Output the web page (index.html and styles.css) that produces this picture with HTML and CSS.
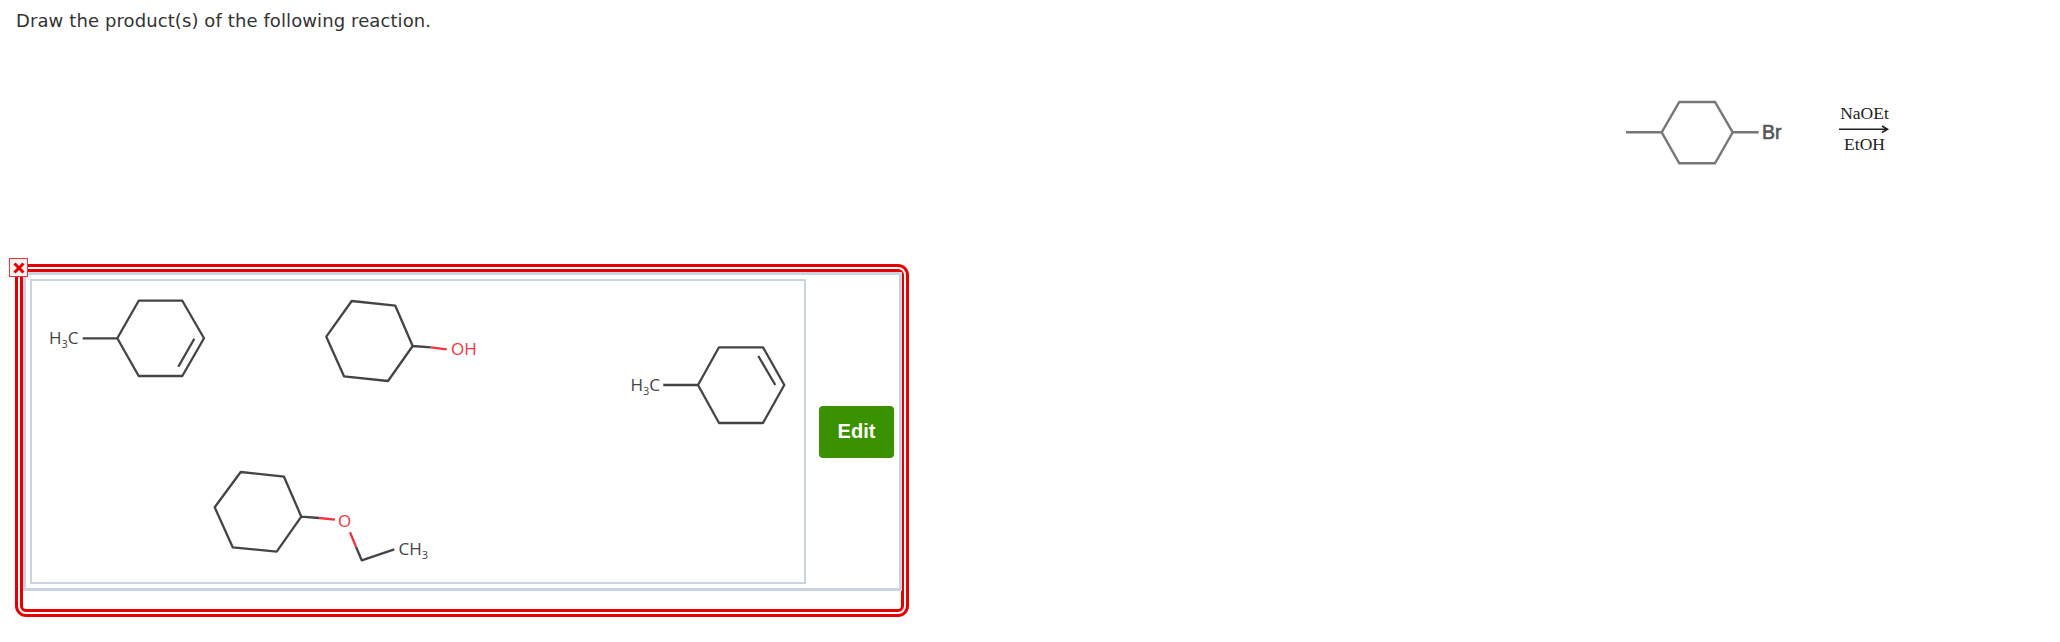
FILE: index.html
```html
<!DOCTYPE html>
<html lang="en">
<head>
<meta charset="utf-8">
<title>Draw the product(s)</title>
<link rel="stylesheet" href="styles.css">
</head>
<body>
<p class="prompt">Draw the product(s) of the following reaction.</p>
<div class="reaction">
  <svg class="reaction-art" width="275" height="85" viewBox="1620 85 275 85">
    <path class="r-bond" d="M1626 132.3H1661.7L1679.3 102H1715L1732.7 132.3L1715 163.3H1679.3L1661.7 132.3M1732.7 132.3H1758.7"/>
    <text class="r-br" x="1762" y="139.3">Br</text>
    <text class="r-reagent" x="1864.5" y="119.3">NaOEt</text>
    <path class="r-arrow" d="M1839 129.3H1887M1882 126L1887.5 129.3L1882 132.5"/>
    <text class="r-reagent" x="1864.5" y="149.7">EtOH</text>
  </svg>
</div>
<div class="answer">
  <button class="close-badge" type="button" aria-label="Remove">
    <svg width="12" height="12" viewBox="0 0 12 12"><path class="close-x" d="M1.5 1.5L10.5 10.5M10.5 1.5L1.5 10.5"/></svg>
  </button>
  <div class="answer-inner">
    <div class="canvas">
      <svg class="canvas-art" width="772" height="301" viewBox="32 281 772 301">
        <path class="bond" d="M82.7 338.3H117.3L138.7 300.7H182.3L204 338.3L182.3 376H138.7L117.3 338.3M194.3 338.7L178.3 366.7"/>
        <text class="atom" x="49" y="344.3">H<tspan class="sub" dy="4">3</tspan><tspan dy="-4">C</tspan></text>

        <path class="bond" d="M351.7 301L395.3 305.7L412.7 346L388 381L344 376.3L326.3 336.7ZM412.7 346L430.7 347.3"/>
        <path class="bond-o" d="M430.7 347.3L446.7 349.3"/>
        <text class="atom-o" x="451" y="355">OH</text>

        <path class="bond" d="M663.3 385H698L719 347.3H763L784.3 385L763 423H719L698 385M758.3 356L775.3 385"/>
        <text class="atom" x="630.5" y="391.3">H<tspan class="sub" dy="4">3</tspan><tspan dy="-4">C</tspan></text>

        <path class="bond" d="M240.7 472L284 476.7L301.3 516.7L276.7 551.7L232.7 547.3L214.7 507.3ZM301.3 516.7L319 518M356 546.7L361.7 560.3L394.3 549.3"/>
        <path class="bond-o" d="M319 518L335 519.7M350 532.3L356 546.7"/>
        <text class="atom-o" x="338" y="526.7">O</text>
        <text class="atom" x="398.5" y="554.5">CH<tspan class="sub" dy="4">3</tspan></text>
      </svg>
    </div>
    <button class="edit" type="button">Edit</button>
  </div>
</div>
</body>
</html>
```
FILE: styles.css
```css
html, body {
  margin: 0;
  padding: 0;
  background: #fff;
}
.prompt {
  margin: 0;
  padding: 10px 16px 12px;
  font: 18px/22px "DejaVu Sans", sans-serif;
  letter-spacing: 0.1px;
  color: #333;
}
.reaction {
  display: flex;
  justify-content: flex-end;
  padding-right: 165px;
  margin-top: 41px;
}
.reaction-art { display: block; }
.r-bond {
  fill: none;
  stroke: #777;
  stroke-width: 2.4;
}
.r-br {
  font: 19.5px "Liberation Sans", sans-serif;
  fill: #555;
  stroke: #555;
  stroke-width: 0.6;
}
.r-reagent {
  font: 17.5px "Liberation Serif", serif;
  fill: #222;
  text-anchor: middle;
}
.r-arrow {
  fill: none;
  stroke: #222;
  stroke-width: 1.6;
}
.answer {
  position: relative;
  box-sizing: border-box;
  width: 894px;
  height: 353px;
  margin: 94px 0 0 15px;
  border: 8px double #e60000;
  border-radius: 11px;
}
.close-badge {
  position: absolute;
  left: -14px;
  top: -14px;
  box-sizing: border-box;
  width: 19px;
  height: 19px;
  padding: 0;
  display: flex;
  align-items: center;
  justify-content: center;
  background: #f4f4f4;
  border: 1.5px solid #ee3333;
}
.close-x {
  fill: none;
  stroke: #e60000;
  stroke-width: 3;
}
.answer-inner {
  box-sizing: border-box;
  width: 879px;
  height: 319px;
  padding: 4px;
  display: flex;
  align-items: center;
  border: 3px solid #c9d4e0;
}
.canvas {
  box-sizing: border-box;
  width: 776px;
  height: 305px;
  flex: none;
  border: 2px solid #c9d4e0;
}
.canvas-art { display: block; }
.bond {
  fill: none;
  stroke: #444;
  stroke-width: 2.3;
  stroke-linejoin: round;
}
.bond-o {
  fill: none;
  stroke: #f0333f;
  stroke-width: 2.3;
}
.atom {
  font: 17px "Open Sans", sans-serif;
  fill: #444;
}
.atom-o {
  font: 17px "Open Sans", sans-serif;
  fill: #f43340;
}
.sub { font-size: 11px; }
.edit {
  width: 75px;
  height: 52px;
  margin-left: 13px;
  padding: 0;
  border: 0;
  border-radius: 4px;
  background: #3a9200;
  color: #fff;
  font: bold 20px "Liberation Sans", sans-serif;
}
```
